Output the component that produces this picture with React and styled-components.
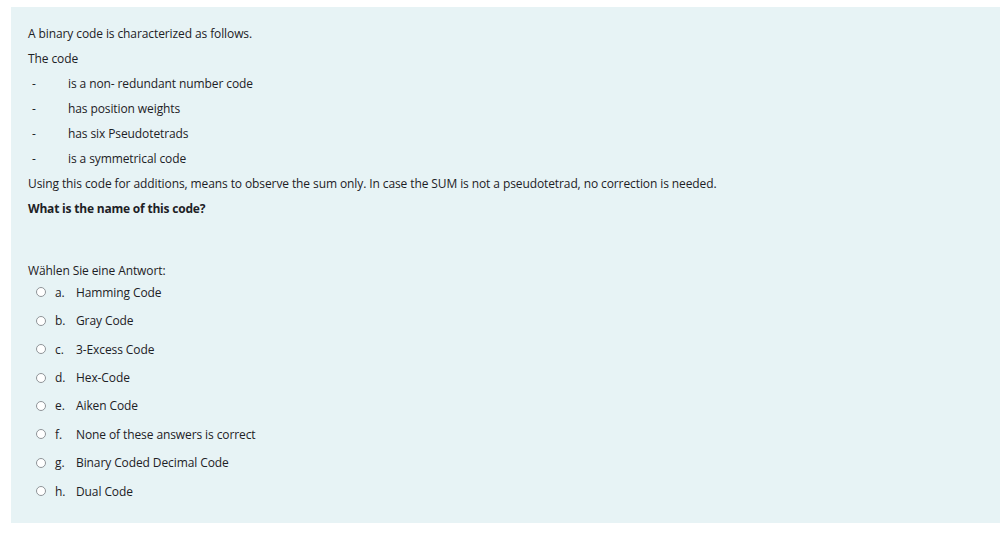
import React from "react";
import styled, { createGlobalStyle } from "styled-components";

const GlobalStyle = createGlobalStyle`
  html, body {
    margin: 0;
    padding: 0;
    background: #ffffff;
  }
  body {
    font-family: "Open Sans", "Noto Sans", sans-serif;
    color: #1d2125;
  }
`;

const Page = styled.div`
  width: 1002px;
  height: 550px;
  padding: 7px 2px 0 11px;
  box-sizing: border-box;
`;

const Panel = styled.div`
  background-color: #e7f3f5;
  height: 516px;
  padding: 17px 17px 0 17px;
  box-sizing: border-box;
  font-size: 12px;
  letter-spacing: -0.1px;
`;

const Line = styled.div`
  height: 25px;
  line-height: 20px;
  font-weight: ${(p) => (p.bold ? 700 : 400)};
  letter-spacing: ${(p) => (p.bold ? "-0.2px" : "-0.1px")};
`;

const Bullet = styled.div`
  display: flex;
  height: 25px;
  line-height: 20px;
`;

const Dash = styled.span`
  width: 40px;
  padding-left: 4px;
  box-sizing: border-box;
`;

const Prompt = styled.div`
  margin-top: 37px;
  line-height: 20px;
`;

const Options = styled.div`
  display: flex;
  flex-direction: column;
  padding-left: 7px;
  margin-top: -3px;
`;

const Option = styled.label`
  display: flex;
  align-items: center;
  height: 28.45px;
`;

const Radio = styled.span`
  width: 8px;
  height: 8px;
  border: 1px solid #8f9498;
  border-radius: 50%;
  background: #ffffff;
  margin: 0 9px 0 1px;
  flex-shrink: 0;
`;

const Letter = styled.span`
  width: 21px;
`;

const bullets = [
  "is a non- redundant number code",
  "has position weights",
  "has six Pseudotetrads",
  "is a symmetrical code",
];

const answers = [
  ["a.", "Hamming Code"],
  ["b.", "Gray Code"],
  ["c.", "3-Excess Code"],
  ["d.", "Hex-Code"],
  ["e.", "Aiken Code"],
  ["f.", "None of these answers is correct"],
  ["g.", "Binary Coded Decimal Code"],
  ["h.", "Dual Code"],
];

export default function App() {
  return (
    <>
      <GlobalStyle />
      <Page>
        <Panel>
          <Line>A binary code is characterized as follows.</Line>
          <Line>The code</Line>
          {bullets.map((b) => (
            <Bullet key={b}>
              <Dash>-</Dash>
              <span>{b}</span>
            </Bullet>
          ))}
          <Line>
            Using this code for additions, means to observe the sum only. In
            case the SUM is not a pseudotetrad, no correction is needed.
          </Line>
          <Line bold>What is the name of this code?</Line>
          <Prompt>Wählen Sie eine Antwort:</Prompt>
          <Options>
            {answers.map(([l, t]) => (
              <Option key={l}>
                <Radio />
                <Letter>{l}</Letter>
                <span>{t}</span>
              </Option>
            ))}
          </Options>
        </Panel>
      </Page>
    </>
  );
}
